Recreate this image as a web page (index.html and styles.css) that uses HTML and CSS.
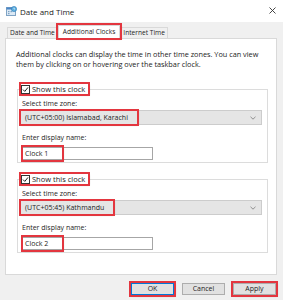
FILE: index.html
```html
<!DOCTYPE html>
<html>
<head>
<meta charset="utf-8">
<link rel="stylesheet" href="styles.css">
</head>
<body>
<div class="window">
  <div class="titlebar">
    <svg class="app-icon" width="11" height="10" viewBox="0 0 11 10">
      <rect x="0.5" y="1.5" width="9" height="8" fill="#dce9f5" stroke="#7fa3c4" stroke-width="1"/>
      <rect x="0.5" y="1.5" width="9" height="2" fill="#4a86c5"/>
      <circle cx="8" cy="3" r="2.6" fill="#5fb0e0" stroke="#2f7bb5" stroke-width="0.6"/>
      <path d="M8 1.8 V3 H9" stroke="#fff" stroke-width="0.6" fill="none"/>
      <rect x="2" y="5" width="1.5" height="1.2" fill="#7fa3c4"/>
      <rect x="4.5" y="5" width="1.5" height="1.2" fill="#7fa3c4"/>
      <rect x="2" y="7" width="1.5" height="1.2" fill="#7fa3c4"/>
    </svg>
    <span class="title">Date and Time</span>
    <svg class="close" width="7" height="7" viewBox="0 0 7 7">
      <path d="M0.5 0.5 L6.5 6.5 M6.5 0.5 L0.5 6.5" stroke="#333" stroke-width="0.9"/>
    </svg>
  </div>
  <div class="main">
    <div class="tabs">
      <div class="tab">Date and Time</div>
      <div class="tab active mark">Additional Clocks</div>
      <div class="tab">Internet Time</div>
    </div>
    <div class="panel">
      <p class="desc">Additional clocks can display the time in other time zones. You can view<br>them by clicking on or hovering over the taskbar clock.</p>

      <fieldset class="group">
        <legend class="check mark"><span class="box"><svg width="7" height="7" viewBox="0 0 7 7"><path d="M1 3.6 L2.8 5.4 L6 1.4" stroke="#222" stroke-width="1" fill="none"/></svg></span>Show this clock</legend>
        <div class="label">Select time zone:</div>
        <div class="select"><span class="sel-text mark">(UTC+05:00) Islamabad, Karachi</span><svg class="chev" width="6" height="4" viewBox="0 0 6 4"><path d="M0.5 0.8 L3 3.2 L5.5 0.8" stroke="#777" stroke-width="0.8" fill="none"/></svg></div>
        <div class="label label2">Enter display name:</div>
        <div class="input"><span class="in-text mark">Clock 1</span></div>
      </fieldset>

      <fieldset class="group group2">
        <legend class="check mark"><span class="box"><svg width="7" height="7" viewBox="0 0 7 7"><path d="M1 3.6 L2.8 5.4 L6 1.4" stroke="#222" stroke-width="1" fill="none"/></svg></span>Show this clock</legend>
        <div class="label">Select time zone:</div>
        <div class="select"><span class="sel-text mark">(UTC+05:45) Kathmandu</span><svg class="chev" width="6" height="4" viewBox="0 0 6 4"><path d="M0.5 0.8 L3 3.2 L5.5 0.8" stroke="#777" stroke-width="0.8" fill="none"/></svg></div>
        <div class="label label2">Enter display name:</div>
        <div class="input"><span class="in-text mark">Clock 2</span></div>
      </fieldset>
    </div>
    <div class="buttons">
      <div class="btn default mark">OK</div>
      <div class="btn">Cancel</div>
      <div class="btn mark">Apply</div>
    </div>
  </div>
</div>
</body>
</html>
```
FILE: styles.css
```css
html, body {
  margin: 0;
  padding: 0;
}
body {
  width: 283px;
  height: 300px;
  overflow: hidden;
  font-family: "Open Sans", "Noto Sans", sans-serif;
  font-size: 7px;
  color: #1e1e1e;
  background: #f0f0f0;
}
.window {
  height: 300px;
  display: flex;
  flex-direction: column;
}
.titlebar {
  height: 22px;
  background: #ffffff;
  display: flex;
  align-items: center;
  padding: 0 7px 0 6px;
  box-sizing: border-box;
}
.app-icon {
  margin-right: 3px;
  margin-top: -1px;
}
.title {
  font-size: 8px;
  color: #222;
  flex: 1;
}
.close {
  margin-top: -1px;
}
.main {
  flex: 1;
  background: #f0f0f0;
  padding: 3px 6px 0 5px;
}
.tabs {
  display: flex;
  align-items: flex-end;
  height: 13px;
  padding-left: 2px;
}
.tab {
  height: 11px;
  line-height: 10px;
  padding: 0 2px;
  border: 1px solid #d9d9d9;
  border-bottom: none;
  background: #f0f0f0;
  box-sizing: border-box;
  white-space: nowrap;
  font-size: 6.6px;
}
.tab.active {
  height: 13px;
  line-height: 12px;
  background: #ffffff;
  padding: 0 4px;
  position: relative;
  z-index: 2;
}
.mark {
  outline: 2px solid #e3363f;
  box-shadow: 1px 1px 2px rgba(0, 0, 0, 0.35);
}
.panel {
  height: 237px;
  box-sizing: border-box;
  background: #ffffff;
  border: 1px solid #d9d9d9;
  padding: 11px 8px 0 11px;
}
.desc {
  margin: 0 0 0 -1px;
  line-height: 9.5px;
  font-size: 7.3px;
  white-space: nowrap;
  color: #222;
}
.group {
  margin: 15px 0 0 0;
  padding: 5px 5px 2px 4px;
  border: 1px solid #dcdcdc;
}
.group2 {
  margin-top: 11px;
}
.check {
  display: flex;
  align-items: center;
  height: 10px;
  padding: 0 3px 0 0;
  margin-left: -1px;
  font-size: 7.5px;
  background: #ffffff;
}
.box {
  width: 9px;
  height: 9px;
  box-sizing: border-box;
  border: 1px solid #333;
  display: inline-flex;
  align-items: center;
  justify-content: center;
  margin-right: 2px;
  background: #fff;
}
.label {
  height: 10px;
  line-height: 10px;
}
.label2 {
  margin-top: 8px;
}
.select {
  margin: 1px 0 0 -2px;
  height: 15px;
  box-sizing: border-box;
  background: #e5e5e5;
  border: 1px solid #cccccc;
  display: flex;
  align-items: center;
  justify-content: space-between;
  padding: 0 5px 0 0;
}
.sel-text {
  padding: 0 9px 0 4px;
  line-height: 13px;
}
.input {
  margin-top: 4px;
  width: 131px;
  height: 13px;
  box-sizing: border-box;
  border: 1px solid #a6a6a6;
  background: #fff;
  display: flex;
  align-items: center;
}
.in-text {
  padding: 0 14px 0 2px;
  line-height: 13px;
}
.buttons {
  display: flex;
  justify-content: flex-end;
  gap: 8px;
  margin-top: 8px;
  padding-right: 1px;
}
.btn {
  width: 43px;
  height: 12px;
  box-sizing: border-box;
  border: 1px solid #adadad;
  background: #e1e1e1;
  text-align: center;
  line-height: 10px;
  font-size: 7px;
}
.btn.default {
  border-color: #0078d7;
}
```
